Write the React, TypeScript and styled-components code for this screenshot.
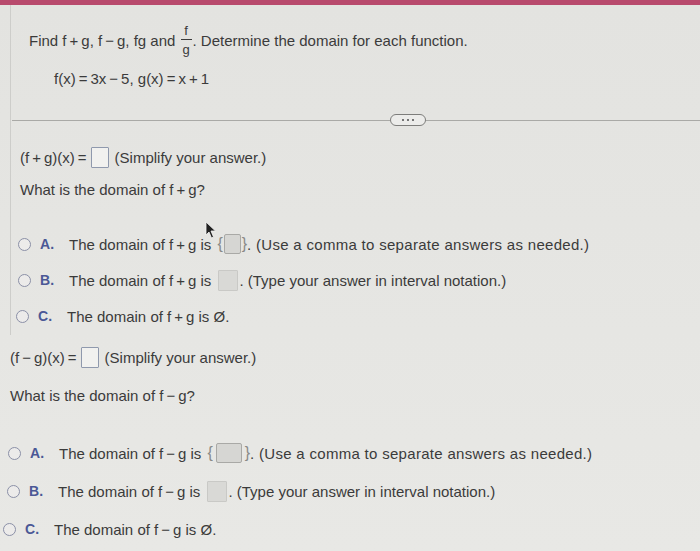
import React from 'react';
import styled, { createGlobalStyle } from 'styled-components';

const GlobalStyle = createGlobalStyle`
  html, body {
    margin: 0;
    padding: 0;
    background: #e6e6e3;
  }
  body {
    font-family: 'Liberation Sans', Arial, sans-serif;
    color: #3b3b3b;
  }
`;

const Page = styled.div`
  width: 700px;
  height: 551px;
  overflow: hidden;
  box-sizing: border-box;
  border-top: 5px solid #b84a6d;
  background:
    linear-gradient(to right, transparent 10px, #cdcdca 10px, #cdcdca 11px, transparent 11px) 0 0 / 100% 330px no-repeat,
    linear-gradient(to bottom, #e3e3e0, #e8e8e5);
  font-size: 15px;
`;

const Header = styled.div`
  padding: 18px 0 0 29px;
`;

const Line = styled.div<{ $indent?: number; $top?: number }>`
  display: flex;
  align-items: center;
  min-height: 20px;
  white-space: pre;
  padding-left: ${(p) => p.$indent ?? 0}px;
  margin-top: ${(p) => p.$top ?? 0}px;
`;

const Fraction = styled.span`
  display: inline-flex;
  flex-direction: column;
  align-items: center;
  font-size: 13px;
  line-height: 15px;
  margin: 0 1px;
`;

const Numer = styled.span`
  border-bottom: 1px solid #3b3b3b;
  padding: 0 1px 1px;
  min-width: 9px;
  text-align: center;
`;

const Denom = styled.span`
  padding-top: 2px;
`;

const DividerRow = styled.div`
  display: flex;
  align-items: center;
  margin: 26px 0 0 12px;
  height: 12px;
`;

const Rule = styled.div<{ $width?: number }>`
  flex: ${(p) => (p.$width ? `0 0 ${p.$width}px` : '1')};
  height: 1px;
  background: #a9a9a6;
`;

const MoreButton = styled.div`
  width: 34px;
  height: 10px;
  border: 1px solid #7d7d7b;
  border-radius: 6px;
  background: #ececea;
  display: flex;
  align-items: center;
  justify-content: center;
  gap: 3px;
`;

const Dot = styled.span`
  width: 2px;
  height: 2px;
  border-radius: 50%;
  background: #4e4e4e;
`;

const Section = styled.div<{ $indent: number; $top: number }>`
  padding-left: ${(p) => p.$indent}px;
  margin-top: ${(p) => p.$top}px;
`;

const AnswerBox = styled.span<{ $tone?: 'blank' | 'grey' }>`
  display: inline-block;
  box-sizing: border-box;
  width: ${(p) => (p.$tone === 'grey' ? 20 : 18)}px;
  height: 21px;
  margin: ${(p) => (p.$tone === 'grey' ? '0 1px 0 7px' : '0 6px 0 4px')};
  border: 1px solid ${(p) => (p.$tone === 'grey' ? '#c9c9c6' : '#8f99ad')};
  background: ${(p) => (p.$tone === 'grey' ? '#d9d9d6' : '#f1f1ef')};
  border-radius: 1px;
`;

const Hint = styled.span<{ $spread?: boolean }>`
  letter-spacing: ${(p) => (p.$spread ? 0.3 : 0)}px;
`;

const SetInput = styled.span`
  position: relative;
  display: inline-flex;
  align-items: center;
  margin-left: 6px;
  color: #8a8a88;
`;

const Brace = styled.span`
  font-size: 16px;
  font-weight: 300;
`;

const SetBox = styled.span<{ $wide?: boolean }>`
  display: inline-block;
  box-sizing: border-box;
  width: ${(p) => (p.$wide ? 26 : 17)}px;
  height: 20px;
  margin: 0 ${(p) => (p.$wide ? 3 : 1)}px;
  border: 1px solid #a9a9a6;
  background: #d6d6d3;
  border-radius: 2px;
`;

const Cursor = styled.svg`
  position: absolute;
  left: -12px;
  top: -13px;
  width: 12px;
  height: 18px;
`;

const Options = styled.div<{ $top: number; $gap: number }>`
  display: flex;
  flex-direction: column;
  gap: ${(p) => p.$gap}px;
  margin-top: ${(p) => p.$top}px;
`;

const Option = styled.div<{ $indent: number }>`
  display: flex;
  align-items: center;
  height: 22px;
  padding-left: ${(p) => p.$indent}px;
  white-space: pre;
`;

const Radio = styled.span`
  width: 13px;
  height: 13px;
  box-sizing: border-box;
  border: 1.5px solid #8b90a7;
  border-radius: 50%;
  background: #ecebea;
  flex-shrink: 0;
`;

const Letter = styled.span`
  width: 29px;
  margin-left: 9px;
  font-size: 14px;
  font-weight: bold;
  color: #4b5896;
`;

const sp = '\u2009';

type Choice = {
  letter: string;
  indent: number;
  kind: 'set' | 'interval' | 'empty';
};

const Choices = ({
  op,
  items,
  top,
  gap,
  cursor,
  wide,
}: {
  op: string;
  items: Choice[];
  top: number;
  gap: number;
  cursor?: boolean;
  wide?: boolean;
}) => (
  <Options $top={top} $gap={gap}>
    {items.map((c) => (
      <Option key={c.letter} $indent={c.indent}>
        <Radio />
        <Letter>{c.letter}.</Letter>
        {c.kind === 'set' && (
          <>
            <span>The domain of f{sp}{op}{sp}g is</span>
            <SetInput>
              {cursor && (
                <Cursor viewBox="0 0 12 18">
                  <path d="M1 1 L1 14 L4 11 L6.5 17 L8.5 16 L6 10 L10.5 10 Z" fill="#222" stroke="#f4f4f4" strokeWidth="0.8" />
                </Cursor>
              )}
              <Brace>{'{'}</Brace>
              <SetBox $wide={wide} />
              <Brace>{'}'}</Brace>
            </SetInput>
            <Hint $spread>. (Use a comma to separate answers as needed.)</Hint>
          </>
        )}
        {c.kind === 'interval' && (
          <>
            <span>The domain of f{sp}{op}{sp}g is</span>
            <AnswerBox $tone="grey" />
            <Hint>. (Type your answer in interval notation.)</Hint>
          </>
        )}
        {c.kind === 'empty' && <span>The domain of f{sp}{op}{sp}g is Ø.</span>}
      </Option>
    ))}
  </Options>
);

export default function App() {
  return (
    <>
      <GlobalStyle />
      <Page>
        <Header>
          <Line>
            <span>Find f{sp}+{sp}g, f{sp}−{sp}g, fg and </span>
            <Fraction>
              <Numer>f</Numer>
              <Denom>g</Denom>
            </Fraction>
            <span>. Determine the domain for each function.</span>
          </Line>
          <Line $indent={25} $top={11}>
            f(x){sp}={sp}3x{sp}−{sp}5, g(x){sp}={sp}x{sp}+{sp}1
          </Line>
        </Header>

        <DividerRow>
          <Rule $width={378} />
          <MoreButton>
            <Dot />
            <Dot />
            <Dot />
          </MoreButton>
          <Rule />
        </DividerRow>

        <Section $indent={20} $top={21}>
          <Line>
            <span>(f{sp}+{sp}g)(x){sp}=</span>
            <AnswerBox />
            <span>(Simplify your answer.)</span>
          </Line>
          <Line $top={11}>What is the domain of f{sp}+{sp}g?</Line>
        </Section>
        <Choices
          op="+"
          top={34}
          gap={14}
          cursor
          items={[
            { letter: 'A', indent: 18, kind: 'set' },
            { letter: 'B', indent: 18, kind: 'interval' },
            { letter: 'C', indent: 16, kind: 'empty' },
          ]}
        />

        <Section $indent={10} $top={20}>
          <Line>
            <span>(f{sp}−{sp}g)(x){sp}=</span>
            <AnswerBox />
            <span>(Simplify your answer.)</span>
          </Line>
          <Line $top={17}>What is the domain of f{sp}−{sp}g?</Line>
        </Section>
        <Choices
          op="−"
          top={37}
          gap={16}
          wide
          items={[
            { letter: 'A', indent: 8, kind: 'set' },
            { letter: 'B', indent: 7, kind: 'interval' },
            { letter: 'C', indent: 3, kind: 'empty' },
          ]}
        />
      </Page>
    </>
  );
}
